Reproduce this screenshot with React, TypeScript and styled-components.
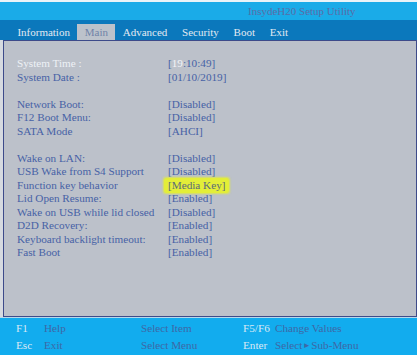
import React from "react";
import styled, { createGlobalStyle } from "styled-components";

const GlobalStyle = createGlobalStyle`
  html, body {
    margin: 0;
    padding: 0;
    background: #ffffff;
  }
  body {
    font-family: "Liberation Serif", "Times New Roman", serif;
  }
`;

const Screen = styled.div`
  width: 417px;
  height: 355px;
  display: flex;
  flex-direction: column;
  background: #d6dae0;
  overflow: hidden;
`;

const TitleBar = styled.div`
  flex-shrink: 0;
  height: 18px;
  border-top: 2px solid #e9f3f8;
  background: #1aabe8;
  display: flex;
  align-items: center;
  padding-left: 248px;
  font-size: 11px;
  color: #5a6ca6;
`;

const TabBar = styled.div`
  flex-shrink: 0;
  height: 20px;
  background: #0b78bc;
  display: flex;
  align-items: flex-end;
  padding-left: 10px;
`;

const Tab = styled.div<{ $active?: boolean }>`
  height: 15px;
  padding: 0 7.4px 1px;
  display: flex;
  align-items: center;
  font-size: 11px;
  color: ${(p) => (p.$active ? "#7182a8" : "#e2eaf2")};
  background: ${(p) => (p.$active ? "#bcc2cb" : "transparent")};
`;

const Body = styled.div`
  flex-shrink: 0;
  height: 277px;
  display: flex;
  padding-left: 3px;
`;

const Panel = styled.div`
  width: 406px;
  height: 259px;
  border: 1px solid #3d4b8a;
  background: #bcc1ca;
  padding: 16px 0 0 13px;
  box-sizing: content-box;
`;

const SideStrip = styled.div`
  flex: 1;
  background: #c9ced6;
  border-top: 1px solid #3d4b8a;
`;

const Settings = styled.div`
  display: grid;
  grid-template-columns: 151px 1fr;
  font-size: 11.2px;
  line-height: 13.5px;
  color: #4762a6;
`;

const Label = styled.div<{ $selected?: boolean }>`
  white-space: nowrap;
  color: ${(p) => (p.$selected ? "#eef1f6" : "#4762a6")};
`;

const Value = styled.div`
  white-space: nowrap;
`;

const Spacer = styled.div`
  grid-column: 1 / span 2;
  height: 13.5px;
`;

const Bright = styled.span`
  color: #f2f4f8;
`;

const Marker = styled.span`
  background: #e3ee38;
  margin-left: -4px;
  padding: 1px 4px 2px;
  border-radius: 2px;
  box-shadow: 0 0 2px 1px rgba(227, 238, 56, 0.8);
  color: #5a6a7a;
`;

const Footer = styled.div`
  flex: 1;
  border-top: 1px solid #b6d8ec;
  background: #12acee;
  display: grid;
  grid-template-columns: 28px 97px 102px 32px 1fr;
  grid-auto-rows: 17.5px;
  align-content: center;
  padding: 0 0 0 16px;
  font-size: 11.2px;
`;

const Key = styled.div`
  color: #dbe9f5;
  white-space: nowrap;
  display: flex;
  align-items: center;
`;

const Hint = styled.div`
  color: #3e68a6;
  white-space: nowrap;
  display: flex;
  align-items: center;
`;

const Arrow = styled.span`
  font-size: 8px;
  margin: 0 0.5px;
`;

type Row = { label: string; value: React.ReactNode; selected?: boolean } | null;

const rows: Row[] = [
  {
    label: "System Time :",
    value: (
      <>
        [<Bright>19</Bright>:10:49]
      </>
    ),
    selected: true,
  },
  { label: "System Date :", value: "[01/10/2019]" },
  null,
  { label: "Network Boot:", value: "[Disabled]" },
  { label: "F12 Boot Menu:", value: "[Disabled]" },
  { label: "SATA Mode", value: "[AHCI]" },
  null,
  { label: "Wake on LAN:", value: "[Disabled]" },
  { label: "USB Wake from S4 Support", value: "[Disabled]" },
  { label: "Function key behavior", value: <Marker>[Media Key]</Marker> },
  { label: "Lid Open Resume:", value: "[Enabled]" },
  { label: "Wake on USB while lid closed", value: "[Disabled]" },
  { label: "D2D Recovery:", value: "[Enabled]" },
  { label: "Keyboard backlight timeout:", value: "[Enabled]" },
  { label: "Fast Boot", value: "[Enabled]" },
];

const tabs = ["Information", "Main", "Advanced", "Security", "Boot", "Exit"];

export default function App() {
  return (
    <Screen>
      <GlobalStyle />
      <TitleBar>InsydeH20 Setup Utility</TitleBar>
      <TabBar>
        {tabs.map((t) => (
          <Tab key={t} $active={t === "Main"}>
            {t}
          </Tab>
        ))}
      </TabBar>
      <Body>
        <Panel>
          <Settings>
            {rows.map((row, i) =>
              row ? (
                <React.Fragment key={i}>
                  <Label $selected={row.selected}>{row.label}</Label>
                  <Value>{row.value}</Value>
                </React.Fragment>
              ) : (
                <Spacer key={i} />
              )
            )}
          </Settings>
        </Panel>
        <SideStrip />
      </Body>
      <Footer>
        <Key>F1</Key>
        <Hint>Help</Hint>
        <Hint>Select Item</Hint>
        <Key>F5/F6</Key>
        <Hint>Change Values</Hint>
        <Key>Esc</Key>
        <Hint>Exit</Hint>
        <Hint>Select Menu</Hint>
        <Key>Enter</Key>
        <Hint>
          Select<Arrow>►</Arrow>Sub-Menu
        </Hint>
      </Footer>
    </Screen>
  );
}
